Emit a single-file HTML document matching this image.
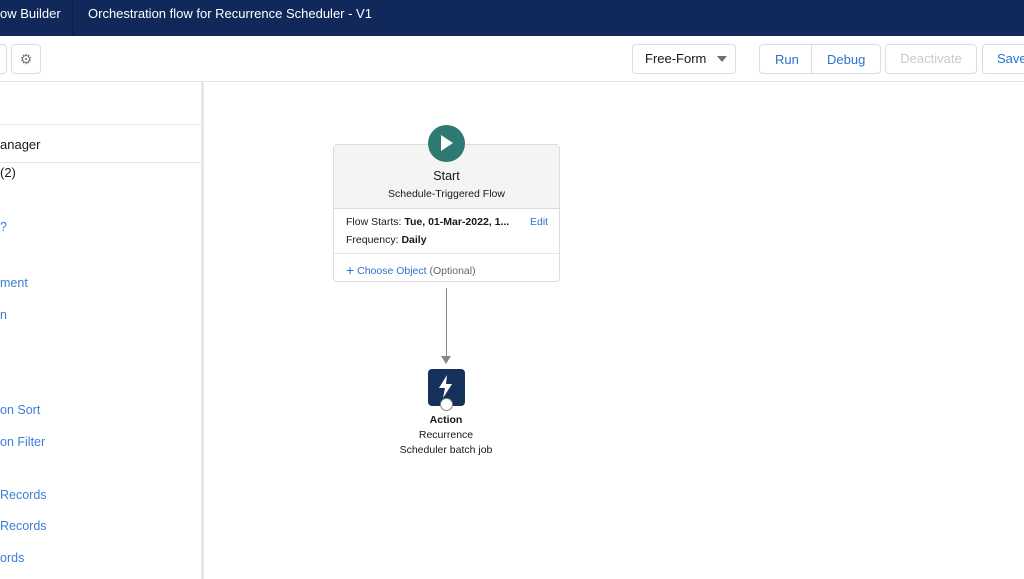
<!DOCTYPE html>
<html><head><style>
*{margin:0;padding:0;box-sizing:border-box}
body{width:1024px;height:579px;overflow:hidden;background:#fff;font-family:"Liberation Sans",sans-serif;position:relative;color:#181818}
.a{position:absolute}
.hdr{left:0;top:0;width:1024px;height:36px;background:#10295a}
.ht{color:#fff;font-size:13px;top:6px}
.btn{position:absolute;top:44px;height:30px;border:1px solid #d8dde6;border-radius:4px;background:#fff;font-size:13px;color:#2a73d0;line-height:28px;text-align:center}
.sl{position:absolute;font-size:12.5px;color:#3a7fd5;left:0}
.blue{color:#2a73d0}
</style></head><body>
<div class="a hdr"></div>
<div class="a" style="left:72px;top:0;width:1px;height:36px;background:#0a1f46"></div>
<div class="a ht" style="left:0">ow Builder</div>
<div class="a ht" style="left:88px">Orchestration flow for Recurrence Scheduler - V1</div>
<div class="a" style="left:0;top:36px;width:1024px;height:46px;background:#fff;border-bottom:1px solid #e5e5e5"></div>
<div class="btn" style="left:-4px;width:11px"></div>
<div class="btn" style="left:11px;width:30px;color:#777;font-size:14px">⚙</div>
<div class="btn" style="left:632px;width:104px;color:#181818;text-align:left;padding-left:12px">Free-Form <span style="position:absolute;left:84px;top:11px;border-left:5px solid transparent;border-right:5px solid transparent;border-top:6px solid #706e6b"></span></div>
<div class="btn" style="left:759px;width:122px"></div>
<div class="a" style="left:811px;top:44px;width:1px;height:30px;background:#d8dde6"></div>
<div class="a blue" style="left:775px;top:52px;font-size:13px">Run</div>
<div class="a blue" style="left:827px;top:52px;font-size:13px">Debug</div>
<div class="btn" style="left:885px;width:92px;color:#c9c9c9">Deactivate</div>
<div class="btn" style="left:982px;width:60px;text-align:left;padding-left:14px;color:#2a73d0">Save</div>
<div class="a" style="left:201px;top:82px;width:3px;height:497px;background:#e8e8e8"></div>
<div class="a" style="left:0;top:124px;width:201px;height:1px;background:#e5e5e5"></div>
<div class="a" style="left:0;top:162px;width:201px;height:1px;background:#e5e5e5"></div>
<div class="a" style="left:0;top:137px;font-size:13px">anager</div>
<div class="a" style="left:0;top:165px;font-size:13px">(2)</div>
<div class="sl" style="top:220px">?</div>
<div class="sl" style="top:276px">ment</div>
<div class="sl" style="top:308px">n</div>
<div class="sl" style="top:403px">on Sort</div>
<div class="sl" style="top:435px">on Filter</div>
<div class="sl" style="top:488px">Records</div>
<div class="sl" style="top:519px"> Records</div>
<div class="sl" style="top:551px">ords</div>
<div class="a" style="left:333px;top:144px;width:227px;height:138px;border:1px solid #dcdcdc;border-radius:4px;background:#fff"></div>
<div class="a" style="left:334px;top:145px;width:225px;height:64px;background:#f4f4f4;border-bottom:1px solid #dcdcdc"></div>
<div class="a" style="left:334px;top:253px;width:225px;height:1px;background:#e5e5e5"></div>
<div class="a" style="left:428px;top:125px;width:37px;height:37px;border-radius:50%;background:#2e7a72"></div>
<div class="a" style="left:441px;top:135px;border-top:8px solid transparent;border-bottom:8px solid transparent;border-left:12px solid #fff"></div>
<div class="a" style="left:334px;top:169px;width:225px;text-align:center;font-size:12.5px">Start</div>
<div class="a" style="left:334px;top:188px;width:225px;text-align:center;font-size:10.5px">Schedule-Triggered Flow</div>
<div class="a" style="left:346px;top:216px;font-size:10.5px">Flow Starts: <b>Tue, 01-Mar-2022, 1...</b></div>
<div class="a blue" style="left:530px;top:216px;font-size:10.5px">Edit</div>
<div class="a" style="left:346px;top:234px;font-size:10.5px">Frequency: <b>Daily</b></div>
<div class="a" style="left:346px;top:261px;font-size:10.5px;color:#666"><span class="blue" style="font-size:14px;position:relative;top:1px">+</span> <span class="blue">Choose Object</span> (Optional)</div>
<div class="a" style="left:446px;top:288px;width:1px;height:68px;background:#888"></div>
<div class="a" style="left:441px;top:356px;border-left:5px solid transparent;border-right:5px solid transparent;border-top:8px solid #888"></div>
<div class="a" style="left:428px;top:369px;width:37px;height:37px;border-radius:4px;background:#16325c"></div>
<svg class="a" style="left:436px;top:374px" width="20" height="26" viewBox="0 0 20 26"><path d="M11 1 L3 14 H9 L7 24 L16 10 H10 Z" fill="#fff"/></svg>
<div class="a" style="left:440px;top:398px;width:13px;height:13px;border-radius:50%;background:#fff;border:1.5px solid #888"></div>
<div class="a" style="left:396px;top:414px;width:100px;text-align:center;font-size:10.5px;font-weight:bold">Action</div>
<div class="a" style="left:386px;top:428px;width:120px;text-align:center;font-size:10.5px;line-height:15px">Recurrence<br>Scheduler batch job</div>
</body></html>
